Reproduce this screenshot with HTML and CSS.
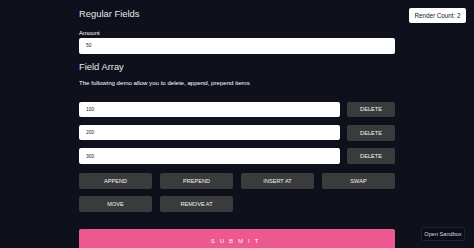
FILE: index.html
```html
<!DOCTYPE html>
<html lang="en">
<head>
  <meta charset="UTF-8">
  <meta name="viewport" content="width=device-width, initial-scale=1.0">
  <title>Field Array</title>
  <link rel="stylesheet" href="styles.css">
</head>
<body>

  <div class="render-count">Render Count: 2</div>

  <form class="form">
    <h1>Regular Fields</h1>
    <label>Amount</label>
    <input class="field" value="50">

    <h1 class="section">Field Array</h1>
    <p>The following demo allow you to delete, append, prepend items</p>

    <ul class="rows">
      <li><input class="field" value="100"><button type="button">Delete</button></li>
      <li><input class="field" value="200"><button type="button">Delete</button></li>
      <li><input class="field" value="300"><button type="button">Delete</button></li>
    </ul>

    <div class="actions">
      <button type="button">Append</button>
      <button type="button">Prepend</button>
      <button type="button">Insert At</button>
      <button type="button">Swap</button>
      <button type="button">Move</button>
      <button type="button">Remove At</button>
    </div>

    <button type="submit" class="submit">Submit</button>
  </form>

  <a class="sandbox">Open Sandbox</a>

</body>
</html>
```

FILE: styles.css
```css
body {
  margin: 0;
  height: 100vh;
  overflow: hidden;
  background: #0e101c;
  color: #fff;
  font-family: 'Liberation Sans', Arial, sans-serif;
}

.form {
  width: 316px;
  margin-left: 79px;
  padding-top: 7px;
}

h1 {
  margin: 0;
  font-size: 9.4px;
  font-weight: 300;
  line-height: 13px;
  color: #e8e8ec;
}

h1.section {
  margin-top: 6px;
}

label {
  display: block;
  margin-top: 10px;
  font-size: 6px;
  line-height: 6px;
}

.field {
  display: block;
  box-sizing: border-box;
  width: 100%;
  height: 15.5px;
  margin: 0;
  margin-top: 2px;
  padding: 0 7px;
  border: none;
  border-radius: 2px;
  background: #fff;
  color: #222;
  font-family: inherit;
  font-size: 4.9px;
}

p {
  margin: 6px 0 0;
  font-size: 6.1px;
  line-height: 8px;
}

.rows {
  list-style: none;
  margin: 15px 0 0;
  padding: 0;
  display: flex;
  flex-direction: column;
  gap: 7.6px;
}

.rows li {
  display: flex;
  gap: 7px;
}

.rows .field {
  flex: 1;
  margin: 0;
  height: 15.6px;
}

button {
  box-sizing: border-box;
  height: 15.8px;
  margin: 0;
  padding: 0;
  border: none;
  border-radius: 2px;
  background: #3a3b3c;
  color: #f4f4f4;
  font-family: inherit;
  font-size: 5.6px;
  text-transform: uppercase;
}

.rows button {
  width: 48px;
}

.actions {
  display: grid;
  grid-template-columns: repeat(4, 1fr);
  gap: 7.5px 8px;
  margin-top: 9px;
}

.submit {
  display: block;
  width: 100%;
  height: 26px;
  margin-top: 16.5px;
  padding-bottom: 1px;
  background: #ec5990;
  font-size: 6px;
  letter-spacing: 5px;
}

.render-count {
  position: absolute;
  top: 7.5px;
  left: 409px;
  width: 57px;
  height: 15.5px;
  box-sizing: border-box;
  border-radius: 2px;
  background: #fff;
  color: #222;
  font-size: 6.3px;
  line-height: 15.5px;
  text-align: center;
}

.sandbox {
  position: absolute;
  top: 227px;
  left: 421px;
  width: 44px;
  height: 14px;
  box-sizing: border-box;
  border: 1px solid #1e2130;
  border-radius: 2px;
  background: #0b0d16;
  color: #ddd;
  font-size: 5.6px;
  line-height: 12px;
  text-align: center;
}
```
